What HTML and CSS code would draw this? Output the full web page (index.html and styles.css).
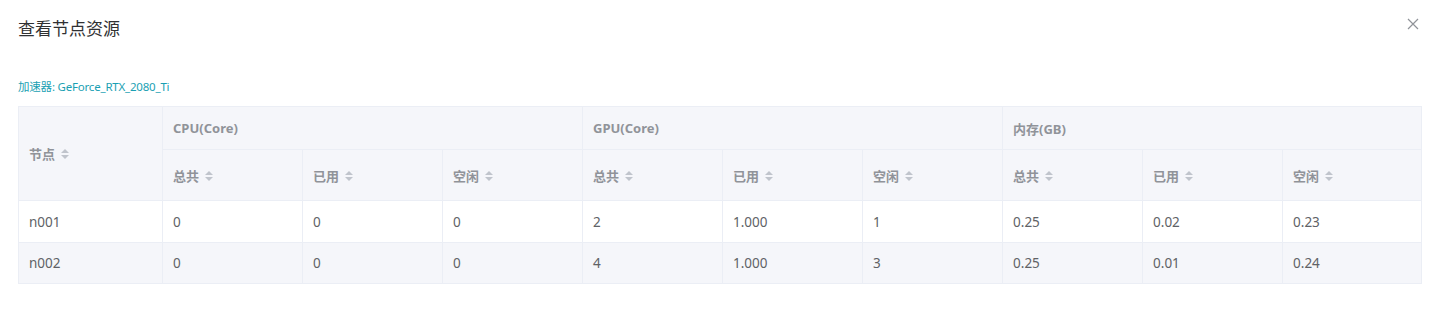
FILE: index.html
```html
<!DOCTYPE html>
<html lang="zh">
<head>
<meta charset="utf-8">
<title>查看节点资源</title>
<link rel="stylesheet" href="styles.css">
</head>
<body>
<div class="dialog">
  <div class="dialog-header">
    <span class="dialog-title">查看节点资源</span>
    <button class="close" aria-label="关闭">
      <svg width="12" height="12" viewBox="0 0 12 12"><path d="M1 1 L11 11 M11 1 L1 11" stroke="#909399" stroke-width="1.2" fill="none"/></svg>
    </button>
  </div>
  <div class="dialog-body">
    <div class="accel">加速器: GeForce_RTX_2080_Ti</div>
    <table class="res-table">
      <colgroup>
        <col class="c-node">
        <col class="c"><col class="c"><col class="c">
        <col class="c"><col class="c"><col class="c">
        <col class="c"><col class="c"><col class="c-last">
      </colgroup>
      <thead>
        <tr class="h1">
          <th rowspan="2">节点 <span class="caret"><i class="up"></i><i class="down"></i></span></th>
          <th colspan="3">CPU(Core)</th>
          <th colspan="3">GPU(Core)</th>
          <th colspan="3">内存(GB)</th>
        </tr>
        <tr class="h2">
          <th>总共 <span class="caret"><i class="up"></i><i class="down"></i></span></th>
          <th>已用 <span class="caret"><i class="up"></i><i class="down"></i></span></th>
          <th>空闲 <span class="caret"><i class="up"></i><i class="down"></i></span></th>
          <th>总共 <span class="caret"><i class="up"></i><i class="down"></i></span></th>
          <th>已用 <span class="caret"><i class="up"></i><i class="down"></i></span></th>
          <th>空闲 <span class="caret"><i class="up"></i><i class="down"></i></span></th>
          <th>总共 <span class="caret"><i class="up"></i><i class="down"></i></span></th>
          <th>已用 <span class="caret"><i class="up"></i><i class="down"></i></span></th>
          <th>空闲 <span class="caret"><i class="up"></i><i class="down"></i></span></th>
        </tr>
      </thead>
      <tbody>
        <tr>
          <td>n001</td><td>0</td><td>0</td><td>0</td><td>2</td><td>1.000</td><td>1</td><td>0.25</td><td>0.02</td><td>0.23</td>
        </tr>
        <tr class="stripe">
          <td>n002</td><td>0</td><td>0</td><td>0</td><td>4</td><td>1.000</td><td>3</td><td>0.25</td><td>0.01</td><td>0.24</td>
        </tr>
      </tbody>
    </table>
  </div>
</div>
</body>
</html>
```
FILE: styles.css
```css
* { box-sizing: border-box; }
html, body { margin: 0; padding: 0; background: #fff; }
body {
  font-family: "Noto Sans", "Open Sans", "Noto Sans CJK SC", sans-serif;
  color: #606266;
}
.dialog { padding: 0 19px 0 18px; }
.dialog-header {
  height: 58px;
  display: flex;
  align-items: center;
  justify-content: space-between;
}
.dialog-title {
  font-family: "Noto Sans CJK SC", sans-serif;
  font-size: 17px;
  color: #303133;
  line-height: 24px;
  margin-top: -3px;
}
.close {
  border: 0;
  background: none;
  padding: 0;
  margin-right: 2px;
  margin-top: -10px;
  width: 12px;
  height: 12px;
  display: flex;
}
.accel {
  margin-top: 19px;
  font-size: 11.5px;
  letter-spacing: -0.2px;
  line-height: 20px;
  color: #1a9fb3;
  margin-bottom: 9px;
}
.res-table {
  width: 1403px;
  table-layout: fixed;
  border-collapse: collapse;
  font-size: 13.5px;
}
.c-node { width: 144px; }
.c { width: 140px; }
.c-last { width: 139px; }
.res-table th, .res-table td {
  border: 1px solid #ebeef5;
  padding: 0 10px;
  text-align: left;
  white-space: nowrap;
}
.res-table th {
  background: #f5f6fa;
  color: #909399;
  font-size: 13px;
  font-weight: 700;
}
.h1 th { height: 43px; }
.h2 th { height: 51px; }
.res-table td { height: 42px; }
.stripe td { background: #f5f6fa; height: 41px; }
.caret {
  display: inline-flex;
  flex-direction: column;
  vertical-align: middle;
  margin-left: 3px;
  gap: 2px;
  position: relative;
  top: -1px;
}
.caret i {
  display: block;
  width: 0; height: 0;
  border-left: 4px solid transparent;
  border-right: 4px solid transparent;
}
.caret .up { border-bottom: 4px solid #c0c4cc; }
.caret .down { border-top: 4px solid #c0c4cc; }
```
